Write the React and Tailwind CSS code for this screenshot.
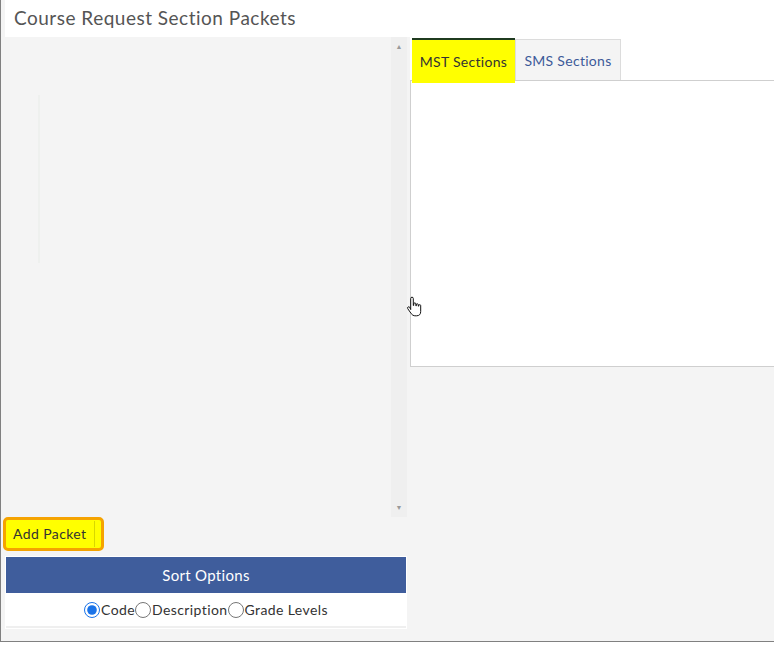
import React from "react";

const sortChoices = ["Code", "Description", "Grade Levels"];

const HandCursor = () => (
  <svg width="18" height="24" viewBox="0 0 18 24" className="absolute left-[406px] top-[296px]">
    <path
      d="M6 1.2q1.3 0 1.3 1.3V9.5h.4V8q0-1.1 1.1-1.1T9.9 8v1.8h.4V8.8q0-1 1-1t1 1v1.4h.4V9.6q0-.9 1-.9t1 .9v5.8q0 4.4-4.2 4.4H8.8q-2 0-3.6-2.2l-3.5-5q-.6-1 .3-1.6t1.9.5L4.7 13.6V2.5Q4.7 1.2 6 1.2Z"
      fill="#fff"
      stroke="#111"
      strokeWidth="1"
      strokeLinejoin="round"
    />
  </svg>
);

const App = () => {
  const [sortBy, setSortBy] = React.useState("Code");

  return (
    <div className="relative w-[774px] bg-white font-['Lato',sans-serif]">
      <div className="h-[642px] bg-[#f4f4f4] border-l border-b border-[#808080]">
        {/* header */}
        <div className="ml-[4px] h-[37px] bg-white flex items-center pl-[9px] text-[19px] text-[#555] tracking-[0.5px]">
          Course Request Section Packets
        </div>

        <div className="flex">
          {/* left column */}
          <div className="ml-[4px] w-[402px]">
            <div className="flex h-[480px]">
              <div className="flex-1 pt-[58px] pl-[33px]">
                <div className="h-[168px] border-l-2 border-[#eef0ee]"></div>
              </div>
              <div className="w-[16px] bg-[#efefef] flex flex-col justify-between items-center py-[6px]">
                <span className="text-[7px] leading-none text-[#9a9a9a]">▲</span>
                <span className="text-[7px] leading-none text-[#9a9a9a]">▼</span>
              </div>
            </div>

            <div className="h-[39px]">
              <button className="ml-[-2px] h-[34px] pl-[7px] pr-[6px] bg-[#ffff00] border-[3px] border-[#f5a300] rounded-[5px] text-[14px] tracking-[0.4px] text-[#333] flex items-center">
                <span className="pr-[7px] border-r border-[#d8d800] leading-[26px]">Add Packet</span>
              </button>
            </div>

            <div className="w-[402px] border border-white bg-white">
              <div className="h-[36px] bg-[#3f5d9c] flex items-center justify-center text-[15px] tracking-[0.3px] text-white">
                Sort Options
              </div>
              <div className="h-[35px] flex items-center justify-center text-[14px] tracking-[0.4px] text-[#333] border-b-2 border-[#efefef]">
                {sortChoices.map((choice) => (
                  <label key={choice} className="flex items-center">
                    <input
                      type="radio"
                      name="sort"
                      checked={sortBy === choice}
                      onChange={() => setSortBy(choice)}
                      className="w-[16px] h-[16px] m-0 mr-[1px] accent-[#1a73e8]"
                    />
                    {choice}
                  </label>
                ))}
              </div>
            </div>
          </div>

          {/* right column */}
          <div className="ml-[3px] flex-1">
            <div className="h-[43px] bg-white flex items-end relative">
              <div className="absolute left-[2px] top-[1px] w-[103px] h-[45px] bg-[#ffff00] border-t-2 border-[#1f3b1f] flex items-center justify-center text-[14px] tracking-[0.3px] text-[#333] z-10">
                MST Sections
              </div>
              <div className="ml-[105px] w-[106px] h-[41px] bg-[#f4f4f4] border border-b-0 border-[#dcdcdc] flex items-center justify-center text-[14px] tracking-[0.3px] text-[#3d5a99]">
                SMS Sections
              </div>
            </div>
            <div className="h-[287px] bg-white border-t border-l border-b border-[#cfcfcf]"></div>
          </div>
        </div>
      </div>
      <HandCursor />
    </div>
  );
};

export default App;
